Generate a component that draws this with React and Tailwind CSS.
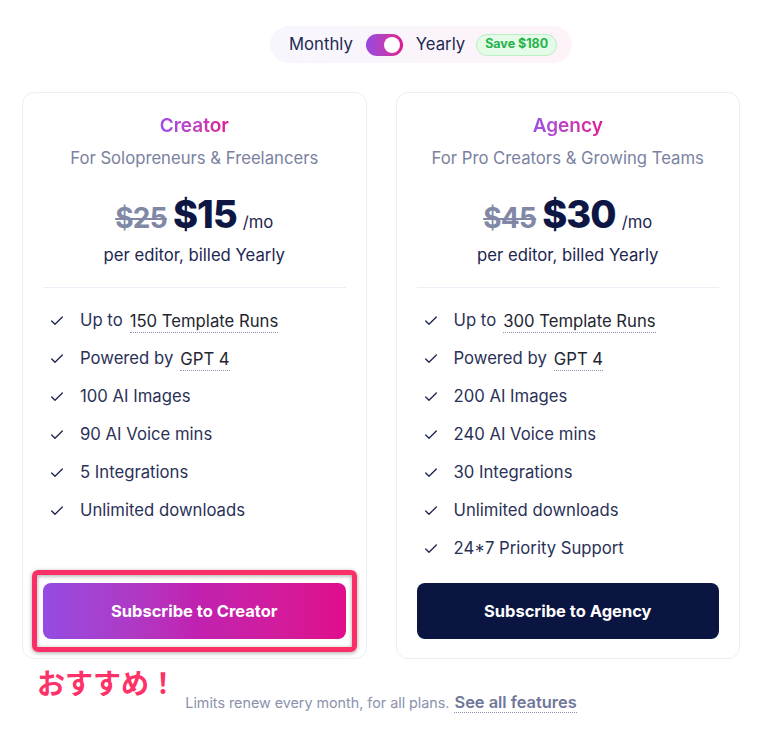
import { Check } from "lucide-react";

const PLANS = [
  {
    name: "Creator",
    tagline: "For Solopreneurs & Freelancers",
    oldPrice: "$25",
    price: "$15",
    runs: "150",
    features: ["100 AI Images", "90 AI Voice mins", "5 Integrations", "Unlimited downloads"],
    highlight: true,
  },
  {
    name: "Agency",
    tagline: "For Pro Creators & Growing Teams",
    oldPrice: "$45",
    price: "$30",
    runs: "300",
    features: [
      "200 AI Images",
      "240 AI Voice mins",
      "30 Integrations",
      "Unlimited downloads",
      "24*7 Priority Support",
    ],
    highlight: false,
  },
];

function Feature({ children }) {
  return (
    <li className="flex items-center h-6">
      <Check className="w-4 h-4 text-[#1e2650] ml-[6px] mr-[15px]" strokeWidth={2} />
      <span className="flex items-center">{children}</span>
    </li>
  );
}

function Dotted({ children }) {
  return (
    <span className="ml-[7px] text-[#23262f] border-b border-dotted border-[#8b93b3] leading-[22px]">
      {children}
    </span>
  );
}

function PlanCard({ plan }) {
  return (
    <div className="relative flex flex-col flex-1 rounded-xl border border-[#eceef6] bg-white px-5 pt-5 pb-[19px]">
      <div className="text-center">
        <div className="text-[19px] leading-[26px] font-semibold bg-gradient-to-r from-[#9d4ee6] to-[#e01394] bg-clip-text text-transparent inline-block">
          {plan.name}
        </div>
        <div className="mt-[7px] text-[16.7px] leading-6 text-[#7a829f]">{plan.tagline}</div>
        <div className="mt-[20px] flex items-baseline justify-center h-12">
          <span className="text-[28px] font-bold text-[#8088a6] line-through decoration-2 tracking-tight">{plan.oldPrice}</span>
          <span className="ml-[6px] text-[38px] leading-[48px] font-extrabold text-[#0e1744] tracking-tight">{plan.price}</span>
          <span className="ml-[6px] text-[16.7px] text-[#1e2650]">/mo</span>
        </div>
        <div className="mt-[5px] text-[16.7px] leading-6 text-[#1e2650]">per editor, billed Yearly</div>
      </div>
      <div className="mt-[20px] border-t border-[#eceef6]" />
      <ul className="mt-[21px] flex flex-col gap-[14px] text-[16.7px] text-[#2a3157]">
        <Feature>
          Up to<Dotted>{plan.runs} Template Runs</Dotted>
        </Feature>
        <Feature>
          Powered by<Dotted>GPT 4</Dotted>
        </Feature>
        {plan.features.map((f) => (
          <Feature key={f}>{f}</Feature>
        ))}
      </ul>
      <div className="mt-auto pt-[22px] relative">
        <button
          className={
            plan.highlight
              ? "w-full h-[56px] rounded-lg text-white font-bold text-[16.5px] bg-gradient-to-r from-[#944be2] via-[#c021b0] to-[#e00c8c]"
              : "w-full h-[56px] rounded-lg text-white font-bold text-[16.5px] bg-[#0b1541]"
          }
        >
          Subscribe to {plan.name}
        </button>
        {plan.highlight && (
          <div className="absolute left-[-11px] right-[-11px] top-[9px] bottom-[-13px] rounded-md border-[5px] border-[#fb2f68] shadow-[0_1px_4px_rgba(0,0,0,0.35),inset_0_1px_4px_rgba(0,0,0,0.35)] pointer-events-none" />
        )}
      </div>
    </div>
  );
}

export default function App() {
  return (
    <div className="w-[768px] h-[741px] bg-white font-['Inter','Noto_Sans_CJK_JP',sans-serif] overflow-hidden">
      <div className="w-[718px] ml-[22px] pt-[26px]">
        <div className="ml-[248px] w-[302px] h-[37px] rounded-full bg-gradient-to-r from-[#f8f6fd] to-[#fdf3f9] flex items-center pl-[19px] whitespace-nowrap">
          <span className="text-[16.7px] text-[#232a52]">Monthly</span>
          <div className="ml-[13px] w-[37px] h-[22px] shrink-0 rounded-full bg-gradient-to-r from-[#9647e0] to-[#e0128f] flex items-center justify-end pr-[3px]">
            <div className="w-4 h-4 rounded-full bg-white" />
          </div>
          <span className="ml-[13px] text-[16.7px] text-[#232a52]">Yearly</span>
          <span className="ml-[11px] h-[22px] px-[8px] shrink-0 rounded-full bg-[#e3fbe7] border border-[#b9efc3] text-[12.5px] font-bold text-[#27b34b] flex items-center whitespace-nowrap">
            Save $180
          </span>
        </div>
        <div className="mt-[29px] flex gap-[29px]">
          {PLANS.map((p) => (
            <PlanCard key={p.name} plan={p} />
          ))}
        </div>
        <div className="relative mt-[33px] flex items-baseline justify-center">
          <span className="absolute left-[15px] top-[-29px] text-[28px] font-bold text-[#fd3268]">
            おすすめ！
          </span>
          <span className="text-[14.3px] text-[#8a92ad]">Limits renew every month, for all plans.</span>
          <span className="ml-[5px] text-[16.4px] font-semibold text-[#6f7899] border-b border-dotted border-[#8b93b3] leading-[20px]">
            See all features
          </span>
        </div>
      </div>
    </div>
  );
}
